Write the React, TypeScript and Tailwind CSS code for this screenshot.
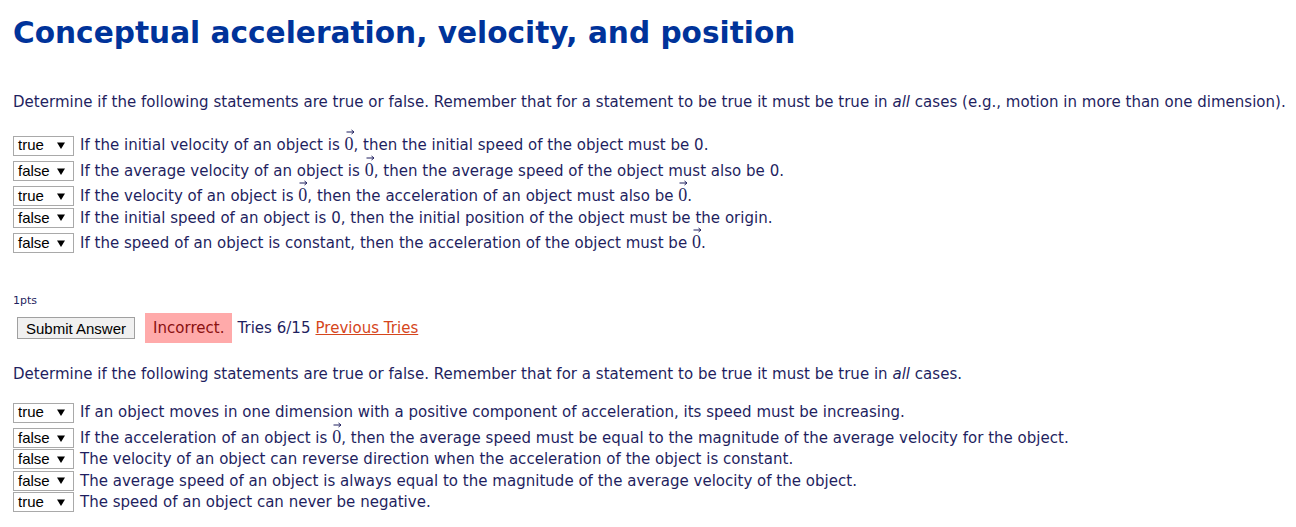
import React from "react";

const body = { fontFamily: '"DejaVu Sans", Verdana, sans-serif' };

function Vec() {
  return (
    <span
      className="relative inline-block text-[18px] leading-none"
      style={{ fontFamily: '"Liberation Serif", serif' }}
    >
      0
      <svg className="absolute left-[1px] top-[-6px]" width="9" height="6" viewBox="0 0 9 6">
        <path d="M0.5 3 H7.5" stroke="#1f1f5f" strokeWidth="1" />
        <path d="M5.5 1 L8 3 L5.5 5" stroke="#1f1f5f" strokeWidth="1" fill="none" />
      </svg>
    </span>
  );
}

function Sel({ v }: { v: string }) {
  return (
    <span
      className="inline-flex h-[20px] w-[61px] shrink-0 items-center justify-between border border-[#a9a9a9] bg-white pl-[4px] pr-[8px] text-[15px] tracking-normal text-black"
      style={{ fontFamily: '"Liberation Sans", Arial, sans-serif' }}
    >
      <span>{v}</span>
      <svg width="8" height="7" viewBox="0 0 8 7">
        <polygon points="0,0.5 8,0.5 4,7" fill="#000" />
      </svg>
    </span>
  );
}

type Row = { v: string; vec: boolean; text: React.ReactNode };

function RowItem({ r }: { r: Row }) {
  return (
    <div className={`box-content flex h-[21.4px] items-center gap-[6px] ${r.vec ? "pt-[4px]" : ""}`}>
      <Sel v={r.v} />
      <span className="whitespace-nowrap">{r.text}</span>
    </div>
  );
}

const rows1: Row[] = [
  { v: "true", vec: true, text: <>If the initial velocity of an object is <Vec />, then the initial speed of the object must be 0.</> },
  { v: "false", vec: true, text: <>If the average velocity of an object is <Vec />, then the average speed of the object must also be 0.</> },
  { v: "true", vec: true, text: <>If the velocity of an object is <Vec />, then the acceleration of an object must also be <Vec />.</> },
  { v: "false", vec: false, text: <>If the initial speed of an object is 0, then the initial position of the object must be the origin.</> },
  { v: "false", vec: true, text: <>If the speed of an object is constant, then the acceleration of the object must be <Vec />.</> },
];

const rows2: Row[] = [
  { v: "true", vec: false, text: <>If an object moves in one dimension with a positive component of acceleration, its speed must be increasing.</> },
  { v: "false", vec: true, text: <>If the acceleration of an object is <Vec />, then the average speed must be equal to the magnitude of the average velocity for the object.</> },
  { v: "false", vec: false, text: <>The velocity of an object can reverse direction when the acceleration of the object is constant.</> },
  { v: "false", vec: false, text: <>The average speed of an object is always equal to the magnitude of the average velocity of the object.</> },
  { v: "true", vec: false, text: <>The speed of an object can never be negative.</> },
];

export default function App() {
  return (
    <div
      className="h-[527px] w-[1296px] overflow-hidden bg-white pl-[13px] text-[15px] tracking-[0.02px] text-[#1f1f5f]"
      style={body}
    >
      <h1 className="pt-[14px] text-[29.6px] font-bold leading-[38px] tracking-normal text-[#00339a]" style={body}>
        Conceptual acceleration, velocity, and position
      </h1>
      <p className="mt-[40px] leading-[20px]">
        Determine if the following statements are true or false. Remember that for a statement to be true it must be true in <i>all</i> cases (e.g., motion in more than one dimension).
      </p>
      <div className="mt-[19px] flex flex-col">
        {rows1.map((r, i) => (
          <RowItem key={i} r={r} />
        ))}
      </div>
      <div className="mt-[40px] text-[11px] leading-[14px]">1pts</div>
      <div className="mt-[5px] flex items-center">
        <button
          className="ml-[4px] h-[22px] border border-[#a0a0a0] bg-[#f0f0f0] px-[8px] text-[15px] tracking-normal text-black"
          style={{ fontFamily: '"Liberation Sans", Arial, sans-serif' }}
        >
          Submit Answer
        </button>
        <span className="ml-[10px] flex h-[30px] items-center bg-[#ffaaaa] px-[8px] text-[#8a1010]">Incorrect.</span>
        <span className="ml-[5px]">Tries 6/15</span>
        <span className="ml-[5px] text-[#d5461c] underline">Previous Tries</span>
      </div>
      <p className="mt-[21px] leading-[20px]">
        Determine if the following statements are true or false. Remember that for a statement to be true it must be true in <i>all</i> cases.
      </p>
      <div className="mt-[18px] flex flex-col">
        {rows2.map((r, i) => (
          <RowItem key={i} r={r} />
        ))}
      </div>
    </div>
  );
}
